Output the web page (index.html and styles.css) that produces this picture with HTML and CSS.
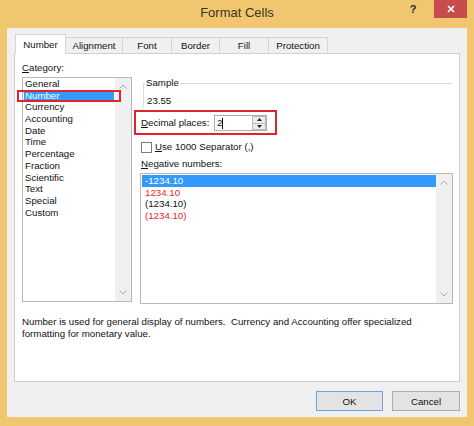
FILE: index.html
```html
<!DOCTYPE html>
<html>
<head>
<meta charset="utf-8">
<title>Format Cells</title>
<link rel="stylesheet" href="styles.css">
</head>
<body>
<div class="window">
  <div class="titlebar">
    <div></div>
    <div class="title">Format Cells</div>
    <div class="caption-buttons">
      <div class="help">?</div>
      <div class="close">
        <svg width="10" height="10" viewBox="0 0 10 10"><path d="M2 2 L8 8 M8 2 L2 8" stroke="#fff" stroke-width="1.7" fill="none"/></svg>
      </div>
    </div>
  </div>
  <div class="dialog">
    <div class="tabs">
      <div class="tab active w-number">Number</div>
      <div class="tab w-alignment">Alignment</div>
      <div class="tab w-font">Font</div>
      <div class="tab w-border">Border</div>
      <div class="tab w-fill">Fill</div>
      <div class="tab w-protection">Protection</div>
    </div>
    <div class="panel">
      <div class="columns">
        <div class="left-col">
          <div class="label"><u>C</u>ategory:</div>
          <div class="listbox cat-list">
            <div class="items">
              <div class="item">General</div>
              <div class="item selected">Number</div>
              <div class="item">Currency</div>
              <div class="item">Accounting</div>
              <div class="item">Date</div>
              <div class="item">Time</div>
              <div class="item">Percentage</div>
              <div class="item">Fraction</div>
              <div class="item">Scientific</div>
              <div class="item">Text</div>
              <div class="item">Special</div>
              <div class="item">Custom</div>
            </div>
            <div class="scrollbar">
              <svg width="8" height="5" viewBox="0 0 8 5"><path d="M0.5 4.5 L4 1 L7.5 4.5" fill="none" stroke="#a8a8a8"/></svg>
              <svg width="8" height="5" viewBox="0 0 8 5"><path d="M0.5 0.5 L4 4 L7.5 0.5" fill="none" stroke="#a8a8a8"/></svg>
            </div>
            <div class="annot annot-number"></div>
          </div>
        </div>
        <div class="right-col">
          <fieldset class="sample">
            <legend>Sample</legend>
            <div class="sample-value">23.55</div>
          </fieldset>
          <div class="decimal-row">
            <span class="decimal-label"><u>D</u>ecimal places:</span>
            <div class="spin-input">
              <span class="spin-value">2</span><span class="caret"></span>
              <div class="spinner">
                <div class="spin-btn"><svg width="5" height="3" viewBox="0 0 5 3"><path d="M0 3 L2.5 0 L5 3 Z" fill="#222"/></svg></div>
                <div class="spin-btn"><svg width="5" height="3" viewBox="0 0 5 3"><path d="M0 0 L2.5 3 L5 0 Z" fill="#222"/></svg></div>
              </div>
            </div>
          </div>
          <div class="check-row"><span class="checkbox"></span><span><u>U</u>se 1000 Separator (,)</span></div>
          <div class="label neg-label"><u>N</u>egative numbers:</div>
          <div class="listbox neg-list">
            <div class="items">
              <div class="item selected">-1234.10</div>
              <div class="item red-text">1234.10</div>
              <div class="item">(1234.10)</div>
              <div class="item red-text">(1234.10)</div>
            </div>
            <div class="scrollbar">
              <svg width="8" height="5" viewBox="0 0 8 5"><path d="M0.5 4.5 L4 1 L7.5 4.5" fill="none" stroke="#a8a8a8"/></svg>
              <svg width="8" height="5" viewBox="0 0 8 5"><path d="M0.5 0.5 L4 4 L7.5 0.5" fill="none" stroke="#a8a8a8"/></svg>
            </div>
          </div>
        </div>
      </div>
      <p class="description">Number is used for general display of numbers.&nbsp; Currency and Accounting offer specialized<br>formatting for monetary value.</p>
    </div>
    <div class="buttons">
      <button class="btn btn-default">OK</button>
      <button class="btn btn-cancel">Cancel</button>
    </div>
  </div>
</div>
</body>
</html>
```

FILE: styles.css
```css
body {
  margin: 0;
}

.window {
  width: 474px;
  height: 426px;
  background: #f0c76e;
  display: flex;
  flex-direction: column;
  font-family: "Liberation Sans", Arial, sans-serif;
  font-size: 9.7px;
  color: #111;
}

.titlebar {
  height: 28px;
  display: grid;
  grid-template-columns: 1fr auto 1fr;
}

.title {
  font-size: 13px;
  line-height: 26px;
  color: #3a3326;
}

.caption-buttons {
  display: flex;
  justify-content: flex-end;
  align-items: flex-start;
  padding-right: 7px;
}

.help {
  width: 20px;
  height: 18px;
  line-height: 18px;
  text-align: center;
  font-weight: bold;
  font-size: 11px;
  margin-right: 11px;
  color: #2b2b2b;
}

.close {
  width: 33px;
  height: 18px;
  background: #c94c4c;
  display: flex;
  align-items: center;
  justify-content: center;
}

.dialog {
  margin: 0 7px;
  height: 389px;
  box-sizing: border-box;
  background: #f0f0f0;
  padding: 6px 7px 0;
}

.tabs {
  display: flex;
  align-items: flex-end;
  height: 19px;
  padding-left: 1px;
}

.tab {
  height: 16px;
  box-sizing: border-box;
  border: 1px solid #d5d5d5;
  border-bottom: none;
  margin-left: -1px;
  background: #f0f0f0;
  text-align: center;
  line-height: 15px;
}

.tab:first-child {
  margin-left: 0;
}

.tab.active {
  height: 20px;
  margin-bottom: -1px;
  background: #fff;
  position: relative;
  z-index: 1;
  line-height: 19px;
}

.w-number { width: 51px; }
.w-alignment { width: 58px; }
.w-font { width: 50px; }
.w-border { width: 49px; }
.w-fill { width: 50px; }
.w-protection { width: 60px; }

.panel {
  height: 329px;
  box-sizing: border-box;
  border: 1px solid #d0d0d0;
  background: #fff;
  padding: 8px 6px 0 7px;
}

.columns {
  display: flex;
  height: 242px;
}

.left-col {
  width: 110px;
}

.right-col {
  width: 319px;
  margin-left: 2px;
}

.label {
  line-height: 12px;
  height: 12px;
}

.listbox {
  position: relative;
  display: flex;
  border: 1px solid #b8b8b8;
  box-sizing: border-box;
  background: #fff;
}

.cat-list {
  margin-top: 3px;
  height: 225px;
}

.items {
  flex: 1;
  padding: 0 1px;
}

.item {
  height: 11.7px;
  line-height: 11.7px;
  padding-left: 1px;
  white-space: nowrap;
}

.item.selected {
  background: #3399ff;
  color: #fff;
}

.red-text {
  color: #e5282e;
}

.scrollbar {
  width: 16px;
  background: #f0f0f0;
  display: flex;
  flex-direction: column;
  justify-content: space-between;
  align-items: center;
  padding: 6px 0;
  box-sizing: border-box;
}

.scrollbar svg {
  display: block;
}

.annot {
  position: absolute;
  border: 2px solid #e0242b;
  box-sizing: border-box;
}

.annot-number {
  left: -6px;
  top: 12px;
  width: 104px;
  height: 12px;
}

.sample {
  margin: 15px 1px 0 9px;
  padding: 6px 0 0 1px;
  border: none;
  border-top: 1px solid #dcdcdc;
  border-left: 1px solid #dcdcdc;
  min-width: 0;
}

.sample legend {
  padding: 0 1px;
  line-height: 12px;
}

.sample-value {
  margin-left: 2px;
  line-height: 12px;
}

.decimal-row {
  margin-top: 3px;
  width: 143px;
  height: 25px;
  box-sizing: border-box;
  border: 2px solid #e0242b;
  display: flex;
  align-items: center;
  padding-left: 5px;
}

.decimal-label {
  width: 73px;
  line-height: 12px;
  flex-shrink: 0;
}

.spin-input {
  width: 53px;
  height: 16px;
  box-sizing: border-box;
  border: 1px solid #abadb3;
  background: #fff;
  display: flex;
  align-items: center;
  margin-top: 1px;
}

.spin-value {
  margin-left: 2px;
  line-height: 12px;
}

.caret {
  width: 1px;
  height: 11px;
  background: #000;
}

.spinner {
  margin-left: auto;
  width: 14px;
  height: 14px;
  display: flex;
  flex-direction: column;
}

.spin-btn {
  flex: 1;
  background: #ececec;
  border: 1px solid #bcbcbc;
  display: flex;
  align-items: center;
  justify-content: center;
}

.spin-btn + .spin-btn {
  border-top: none;
}

.spin-btn svg {
  display: block;
}

.check-row {
  margin-top: 6px;
  margin-left: 7px;
  display: flex;
  align-items: center;
  height: 12px;
  line-height: 12px;
}

.checkbox {
  width: 11px;
  height: 11px;
  box-sizing: border-box;
  border: 1px solid #7a7a7a;
  background: #fff;
  margin-right: 3px;
}

.neg-label {
  margin-top: 5px;
  margin-left: 7px;
}

.neg-list {
  margin-top: 3px;
  margin-left: 6px;
  width: 313px;
  height: 131px;
}

.neg-list .items {
  padding: 1px 0 0 1px;
}

.neg-list .item {
  padding-left: 3px;
}

.description {
  margin: 12px 0 0;
  line-height: 12px;
}

.buttons {
  display: flex;
  justify-content: flex-end;
  gap: 9px;
  margin-top: 9px;
}

.btn {
  height: 20px;
  width: 68px;
  box-sizing: border-box;
  border: 1px solid #adadad;
  background: #e3e3e3;
  font: inherit;
  color: #111;
  padding: 0;
}

.btn-default {
  width: 67px;
  border-color: #6aa6e0;
}
```
